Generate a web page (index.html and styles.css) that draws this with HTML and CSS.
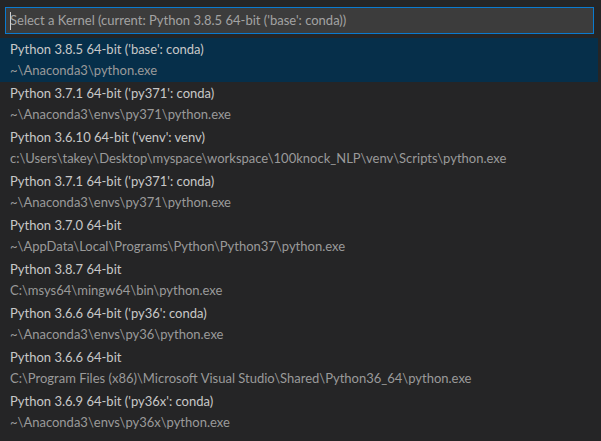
FILE: index.html
```html
<!DOCTYPE html>
<html>
<head>
<meta charset="utf-8">
<link rel="stylesheet" href="styles.css">
</head>
<body>
<div class="quick-input">
  <div class="input-box">
    <span class="caret"></span>
    <span class="placeholder">Select a Kernel (current: Python 3.8.5 64-bit ('base': conda))</span>
  </div>
  <ul class="list">
    <li class="item selected"><div class="label">Python 3.8.5 64-bit ('base': conda)</div><div class="detail">~\Anaconda3\python.exe</div></li>
    <li class="item"><div class="label">Python 3.7.1 64-bit ('py371': conda)</div><div class="detail">~\Anaconda3\envs\py371\python.exe</div></li>
    <li class="item"><div class="label">Python 3.6.10 64-bit ('venv': venv)</div><div class="detail">c:\Users\takey\Desktop\myspace\workspace\100knock_NLP\venv\Scripts\python.exe</div></li>
    <li class="item"><div class="label">Python 3.7.1 64-bit ('py371': conda)</div><div class="detail">~\Anaconda3\envs\py371\python.exe</div></li>
    <li class="item"><div class="label">Python 3.7.0 64-bit</div><div class="detail">~\AppData\Local\Programs\Python\Python37\python.exe</div></li>
    <li class="item"><div class="label">Python 3.8.7 64-bit</div><div class="detail">C:\msys64\mingw64\bin\python.exe</div></li>
    <li class="item"><div class="label">Python 3.6.6 64-bit ('py36': conda)</div><div class="detail">~\Anaconda3\envs\py36\python.exe</div></li>
    <li class="item"><div class="label">Python 3.6.6 64-bit</div><div class="detail">C:\Program Files (x86)\Microsoft Visual Studio\Shared\Python36_64\python.exe</div></li>
    <li class="item"><div class="label">Python 3.6.9 64-bit ('py36x': conda)</div><div class="detail">~\Anaconda3\envs\py36x\python.exe</div></li>
  </ul>
</div>
</body>
</html>
```
FILE: styles.css
```css
html, body {
  margin: 0;
  padding: 0;
  background: #252526;
  height: 100%;
  overflow: hidden;
}
body {
  font-family: "Lato", "Noto Sans", sans-serif;
  font-size: 13px;
  color: #cccccc;
}
.quick-input {
  width: 598px;
  padding-top: 7px;
}
.input-box {
  margin: 0 4px 0 5px;
  height: 25px;
  border: 1px solid #0a7bd0;
  background: #3c3c3c;
  display: flex;
  align-items: center;
  padding-left: 4px;
  position: relative;
}
.caret {
  position: absolute;
  left: 4px;
  top: 4px;
  width: 1px;
  height: 18px;
  background: #d0d0d0;
}
.placeholder {
  color: #a3a3a3;
  white-space: nowrap;
  line-height: 25px;
}
.list {
  list-style: none;
  margin: 4px 0 0 0;
  padding: 0;
}
.item {
  height: 44px;
  box-sizing: border-box;
  padding: 1px 0 0 10px;
  white-space: nowrap;
  overflow: hidden;
}
.item.selected {
  background: #062f4a;
}
.label {
  line-height: 21px;
  color: #c8c8c8;
}
.detail {
  line-height: 20px;
  color: #9a9a9a;
}
```
